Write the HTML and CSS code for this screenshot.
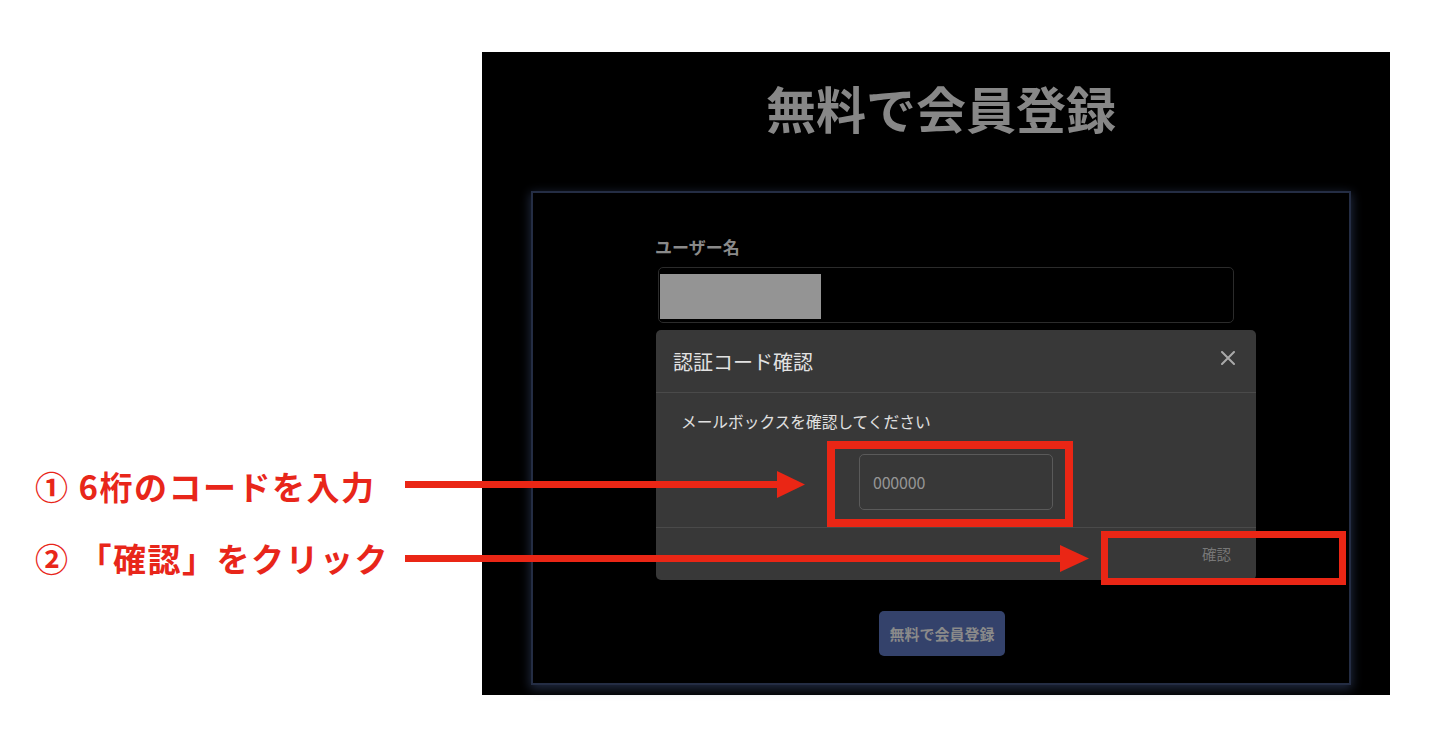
FILE: index.html
```html
<!DOCTYPE html>
<html lang="ja">
<head>
<meta charset="utf-8">
<title>無料で会員登録</title>
<link rel="stylesheet" href="styles.css">
</head>
<body>
<div class="stage">
  <div class="panel">
    <h1 class="title">無料で会員登録</h1>
    <div class="card">
      <div class="form">
        <div class="label">ユーザー名</div>
        <div class="input">
          <div class="redacted"></div>
        </div>
      </div>
      <button class="submit">無料で会員登録</button>
    </div>
  </div>

  <div class="modal">
    <div class="modal-header">
      <span class="modal-title">認証コード確認</span>
      <svg class="close" width="14" height="14" viewBox="0 0 14 14"><path d="M1 1L13 13M13 1L1 13" stroke="#a9a9a9" stroke-width="2" stroke-linecap="round"/></svg>
    </div>
    <div class="modal-body">
      <p class="modal-text">メールボックスを確認してください</p>
      <div class="code-input"><span class="placeholder">000000</span></div>
    </div>
    <div class="modal-footer">
      <span class="confirm">確認</span>
    </div>
  </div>

  <div class="note note-1">① 6桁のコードを入力</div>
  <div class="note note-2">② 「確認」をクリック</div>

  <svg class="arrows" width="1448" height="750" viewBox="0 0 1448 750">
    <rect x="405" y="481" width="374" height="7" fill="#ea2615"/>
    <polygon points="777,471 805,484.5 777,498" fill="#ea2615"/>
    <rect x="405" y="555" width="656" height="7" fill="#ea2615"/>
    <polygon points="1060,545 1089,558.5 1060,572" fill="#ea2615"/>
  </svg>

  <div class="hl hl-1"></div>
  <div class="hl hl-2"></div>
</div>
</body>
</html>
```

FILE: styles.css
```css
* { box-sizing: border-box; }

html, body {
  margin: 0;
  padding: 0;
  background: #ffffff;
  font-family: "Noto Sans CJK JP", "Noto Sans", sans-serif;
}

.stage {
  position: relative;
  width: 1448px;
  height: 750px;
  padding: 52px 0 0 482px;
  overflow: hidden;
}

.panel {
  width: 908px;
  height: 643px;
  background: #000000;
  padding-left: 10px;
  display: flex;
  flex-direction: column;
  align-items: center;
}

.title {
  margin: 25px 0 0;
  font-size: 50px;
  line-height: 60px;
  font-weight: 700;
  color: #878787;
  letter-spacing: 0;
}

.card {
  margin-top: 54px;
  width: 820px;
  height: 494px;
  border: 2px solid #242d44;
  box-shadow: 0 3px 10px 1px rgba(70, 90, 140, 0.45);
  background: #000;
  display: flex;
  flex-direction: column;
  align-items: stretch;
  padding: 43px 0 27px 122px;
}

.form {
  display: flex;
  flex-direction: column;
  align-items: flex-start;
}

.label {
  font-size: 17px;
  line-height: 22px;
  font-weight: 700;
  color: #8a8a8a;
}

.input {
  margin: 9px 0 0 3px;
  width: 576px;
  height: 56px;
  border: 1px solid #2b2b2b;
  border-radius: 5px;
  padding: 6px 0 0 1px;
}

.redacted {
  width: 161px;
  height: 45px;
  background: #949494;
}

.submit {
  margin-top: auto;
  align-self: flex-start;
  margin-left: 224px;
  width: 126px;
  height: 45px;
  border: none;
  border-radius: 5px;
  background: #34426b;
  color: #8a8a8a;
  font-family: inherit;
  font-size: 15px;
  font-weight: 700;
  padding: 0;
}

/* modal overlay */
.modal {
  position: absolute;
  left: 656px;
  top: 330px;
  width: 600px;
  height: 250px;
  background: #383838;
  border-radius: 5px;
  display: flex;
  flex-direction: column;
}

.modal-header {
  height: 63px;
  border-bottom: 1px solid #4a4a4a;
  display: flex;
  align-items: center;
  justify-content: space-between;
  padding: 2px 21px 0 17px;
}

.modal-title {
  font-size: 20px;
  line-height: 28px;
  color: #e2e2e2;
}

.close {
  display: block;
  margin-top: -8px;
}

.modal-body {
  height: 134px;
  display: flex;
  flex-direction: column;
  align-items: center;
}

.modal-text {
  align-self: flex-start;
  margin: 18px 0 0 25px;
  font-size: 15.7px;
  line-height: 22px;
  color: #e0e0e0;
}

.code-input {
  margin-top: 21px;
  width: 194px;
  height: 56px;
  border: 1px solid #5a5a5a;
  border-radius: 5px;
  display: flex;
  align-items: center;
  padding-left: 13px;
}

.placeholder {
  font-size: 16px;
  color: #959595;
  letter-spacing: -0.2px;
}

.modal-footer {
  flex: 1;
  border-top: 1px solid #4a4a4a;
  display: flex;
  align-items: center;
  justify-content: flex-end;
  padding: 0 25px 2px 0;
}

.confirm {
  font-size: 14.5px;
  color: #777777;
}

/* annotations */
.note {
  position: absolute;
  left: 35px;
  font-size: 33px;
  line-height: 40px;
  font-weight: 700;
  color: #e8261a;
  letter-spacing: 1.5px;
  white-space: nowrap;
}

.note-1 { top: 466px; }
.note-2 { top: 538px; }

.arrows {
  position: absolute;
  left: 0;
  top: 0;
}

.hl {
  position: absolute;
  border: 8px solid #ea2615;
}

.hl-1 {
  left: 827px;
  top: 441px;
  width: 246px;
  height: 86px;
}

.hl-2 {
  left: 1101px;
  top: 531px;
  width: 245px;
  height: 54px;
  border-width: 7px;
}
```
